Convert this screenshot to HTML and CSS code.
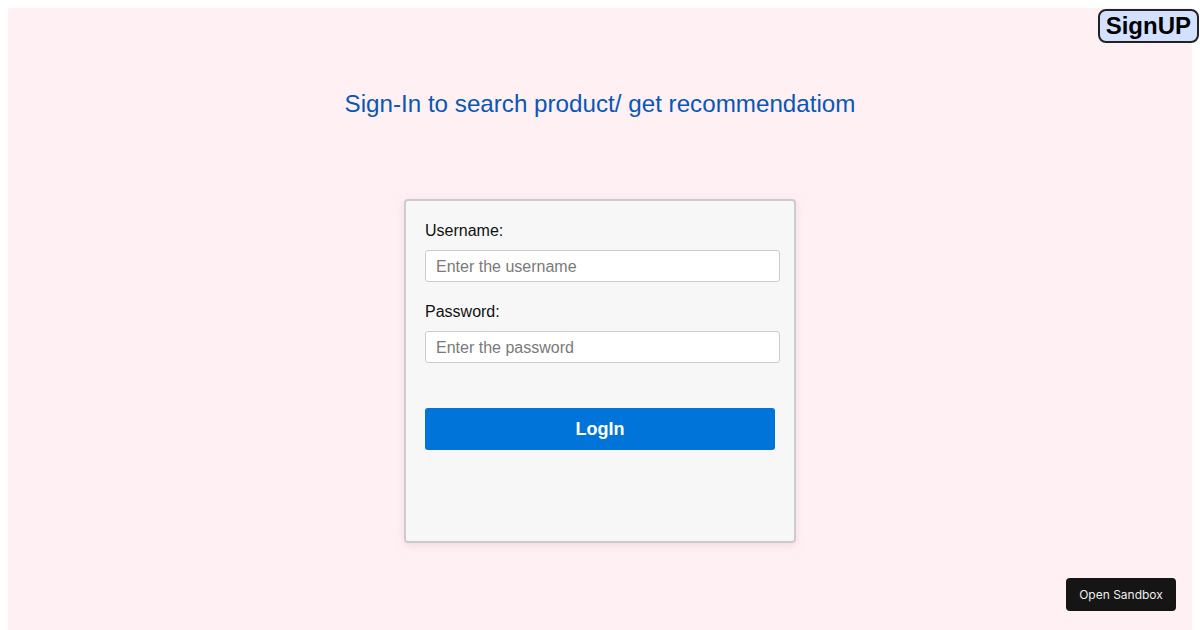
FILE: index.html
```html
<!DOCTYPE html>
<html>
<head>
<meta charset="utf-8">
<link rel="stylesheet" href="styles.css">
</head>
<body>
<div class="page">
  <button class="signup">SignUP</button>
  <h2 class="title">Sign-In to search product/ get recommendatiom</h2>
  <form class="card">
    <label class="label">Username:</label>
    <input class="field" type="text" placeholder="Enter the username">
    <label class="label">Password:</label>
    <input class="field" type="password" placeholder="Enter the password">
    <button class="login" type="button">LogIn</button>
  </form>
</div>
<a class="sandbox">Open Sandbox</a>
</body>
</html>
```
FILE: styles.css
```css
html, body { height: 100%; }
body {
  margin: 8px;
  background: #ffffff;
  font-family: "Liberation Sans", Arial, sans-serif;
  overflow: hidden;
}
.page {
  background: #fff0f4;
  min-height: 640px;
  display: flex;
  flex-direction: column;
  align-items: center;
  padding-top: 80px;
  box-sizing: border-box;
}
.signup {
  position: absolute;
  top: 9px;
  right: 1px;
  font-family: "Liberation Sans", Arial, sans-serif;
  font-weight: bold;
  font-size: 24px;
  color: #000;
  background: #d3e1ff;
  border: 2px solid #222;
  border-radius: 8px;
  padding: 0 6px;
  height: 34px;
  line-height: 28px;
}
.title {
  margin: 0;
  font-size: 24.2px;
  font-weight: normal;
  color: #0a56b5;
  line-height: 32px;
}
.card {
  margin-top: 79px;
  width: 350px;
  height: 300px;
  padding: 20px 19px 20px 19px;
  border: 2px solid #cccccc;
  border-radius: 4px;
  background: #f7f7f7;
  box-shadow: 0 2px 8px rgba(230, 200, 210, 0.6);
  display: flex;
  flex-direction: column;
  align-items: flex-start;
}
.label {
  font-size: 16px;
  color: #111;
  line-height: 18px;
  margin-top: 1px;
}
.field {
  margin-top: 10px;
  margin-bottom: 22px;
  width: 355px;
  height: 32px;
  box-sizing: border-box;
  border: 1px solid #cccccc;
  border-radius: 3px;
  background: #fff;
  padding: 2px 10px 0;
  font-family: "Liberation Sans", Arial, sans-serif;
  font-size: 16px;
}
.field::placeholder { color: #7a7a7a; }
.field + .label { margin-top: -1px; }
.login {
  margin-top: 23px;
  width: 350px;
  height: 42px;
  border: none;
  border-radius: 3px;
  background: #0074d9;
  color: #fff;
  font-family: "Liberation Sans", Arial, sans-serif;
  font-weight: bold;
  font-size: 18px;
}
.sandbox {
  position: absolute;
  right: 24px;
  bottom: 19px;
  width: 110px;
  height: 33px;
  box-sizing: border-box;
  background: #151515;
  color: #eee;
  border-radius: 4px;
  font-family: Inter, "Liberation Sans", sans-serif;
  font-size: 12px;
  display: flex;
  align-items: center;
  justify-content: center;
}
```
